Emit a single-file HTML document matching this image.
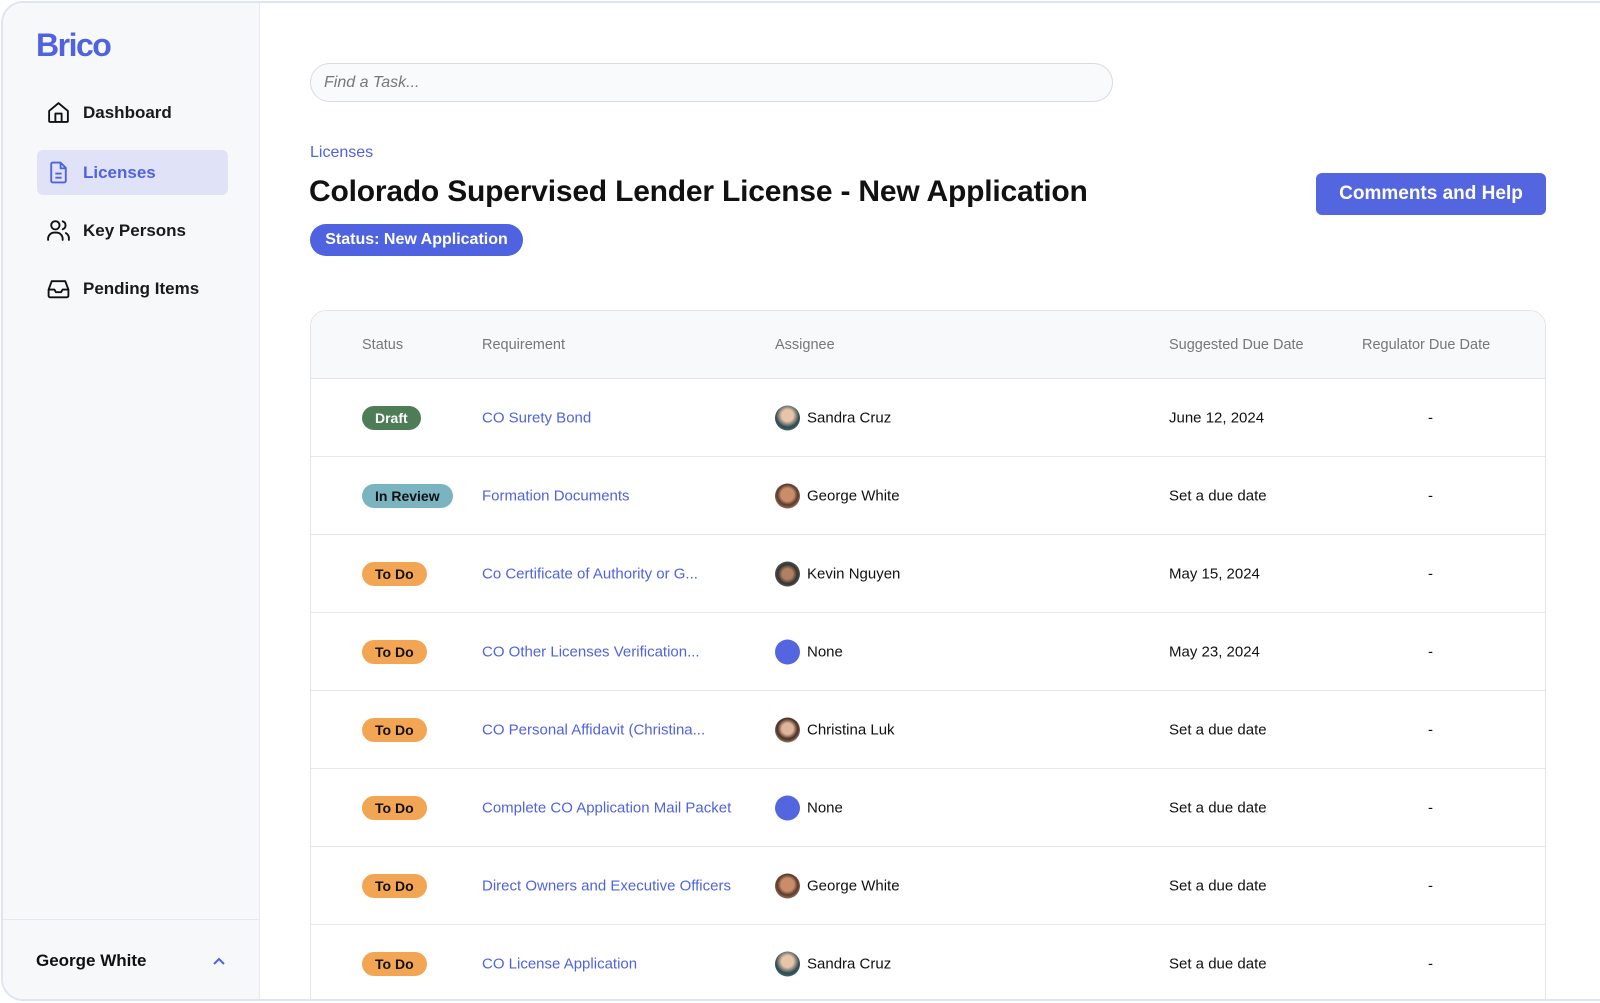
<!DOCTYPE html>
<html><head><meta charset="utf-8"><style>
*{box-sizing:border-box;margin:0;padding:0}
body{width:1600px;height:1003px;background:#fff;font-family:"Liberation Sans",sans-serif;color:#111;position:relative;overflow:hidden}
.frame{position:absolute;left:1px;top:1px;width:1640px;height:1000px;border:2px solid #dfe3f7;border-radius:22px;overflow:hidden;background:#fff}
.side{position:absolute;left:0;top:0;width:257px;height:100%;background:#f7f8fa;border-right:1px solid #e8eaef}
.logo{position:absolute;left:33px;top:24px;font-size:32px;font-weight:700;color:#4f63e0;letter-spacing:-1.5px}
.nav{position:absolute;left:34px;width:191px;height:45px;display:flex;align-items:center;padding-left:9px;font-size:17px;font-weight:700;color:#1a1a1a;border-radius:6px}
.nav svg{width:25px;height:25px;margin-right:12px}
.nav.act{background:#e0e3f8;color:#4f63e0}
.foot{position:absolute;left:0;top:916px;width:256px;border-top:1px solid #e6e8ee;height:90px}
.foot span{position:absolute;left:33px;top:31px;font-size:17px;font-weight:700}
.search{position:absolute;left:307px;top:60px;width:803px;height:39px;border:1px solid #d9dbe0;border-radius:20px;background:#f9fafb;padding-left:13px;line-height:37px;font-size:16px;font-style:italic;color:#777}
.crumb{position:absolute;left:307px;top:141px;font-size:16px;color:#4f63e0}
h1{position:absolute;left:306px;top:172px;font-size:30px;font-weight:700;letter-spacing:-0.2px;white-space:nowrap}
.stat{position:absolute;left:307px;top:221px;width:213px;height:32px;border-radius:16px;background:#4f63e0;color:#fff;font-size:16px;font-weight:700;line-height:32px;text-align:center}
.btn{position:absolute;left:1313px;top:170px;width:230px;height:42px;border-radius:6px;background:#5366e0;color:#fff;font-size:19px;font-weight:700;line-height:42px;text-align:center}
.tbl{position:absolute;left:307px;top:307px;width:1236px;height:720px;border:1px solid #e3e5ea;border-radius:16px;overflow:hidden;background:#fff}
.hd{height:68px;background:#f8f9fa;border-bottom:1px solid #e3e5ea;position:relative;font-size:14.5px;color:#777}
.hd span,.row span{position:absolute;top:50%;transform:translateY(-50%);white-space:nowrap}
.row{height:78px;border-bottom:1px solid #e6e7eb;position:relative;font-size:15px;color:#111}
.pill{height:24px;line-height:24px;border-radius:12px;padding:0 13px;font-weight:700;font-size:14px}
.dr{background:#4d7c57;color:#fff}.ir{background:#7ab4c1;color:#111}.td{background:#f2a654;color:#111}
.lk{color:#4f63e0}
.av{width:25px;height:25px;border-radius:50%}
</style></head><body>
<div class="frame">
<div class="side">
<div class="logo">Brico</div>
<div class="nav" style="top:87px"><svg viewBox="0 0 24 24" fill="none" stroke="#111" stroke-width="1.8" stroke-linejoin="round"><path d="M3 10.5L12 3l9 7.5V20a1 1 0 0 1-1 1H4a1 1 0 0 1-1-1z"/><path d="M9 21v-8h6v8"/></svg>Dashboard</div>
<div class="nav act" style="top:147px"><svg viewBox="0 0 24 24" fill="none" stroke="#4f63e0" stroke-width="1.8" stroke-linejoin="round"><path d="M6 2.5h8l5 5V20a1.5 1.5 0 0 1-1.5 1.5h-11A1.5 1.5 0 0 1 5 20V4a1.5 1.5 0 0 1 1-1.5z"/><path d="M14 2.5V8h5M9 13h6M9 17h6"/></svg>Licenses</div>
<div class="nav" style="top:205px"><svg viewBox="0 0 24 24" fill="none" stroke="#111" stroke-width="1.8" stroke-linecap="round"><circle cx="9" cy="7" r="4"/><path d="M2 21v-1a6 6 0 0 1 6-6h2a6 6 0 0 1 6 6v1M16 3.2a4 4 0 0 1 0 7.6M19 14.5a6 6 0 0 1 3 5.5v1"/></svg>Key Persons</div>
<div class="nav" style="top:263px"><svg viewBox="0 0 24 24" fill="none" stroke="#111" stroke-width="1.8" stroke-linejoin="round"><path d="M2.5 13l3-8h13l3 8v6a1.5 1.5 0 0 1-1.5 1.5H4A1.5 1.5 0 0 1 2.5 19z"/><path d="M2.5 13h5.5l1.5 2.5h5l1.5-2.5h5.5"/></svg>Pending Items</div>
<div class="foot"><span>George White</span><svg style="position:absolute;left:209px;top:36px" width="14" height="10" viewBox="0 0 14 10"><path d="M2 8l5-5 5 5" fill="none" stroke="#4f63e0" stroke-width="2"/></svg></div>
</div>
<div class="search">Find a Task...</div>
<div class="crumb">Licenses</div>
<h1>Colorado Supervised Lender License - New Application</h1>
<div class="stat">Status: New Application</div>
<div class="btn">Comments and Help</div>
<div class="tbl">
<div class="hd"><span style="left:51px">Status</span><span style="left:171px">Requirement</span><span style="left:464px">Assignee</span><span style="left:858px">Suggested Due Date</span><span style="left:1051px">Regulator Due Date</span></div>
<div class="row"><span class="pill dr" style="left:51px">Draft</span><span class="lk" style="left:171px">CO Surety Bond</span><span class="av" style="left:464px;background:radial-gradient(circle at 50% 40%,#e8c4a8 30%,#2c4a50 60%,#5a8f9a)"></span><span style="left:496px">Sandra Cruz</span><span style="left:858px">June 12, 2024</span><span style="left:1117px">-</span></div>
<div class="row"><span class="pill ir" style="left:51px">In Review</span><span class="lk" style="left:171px">Formation Documents</span><span class="av" style="left:464px;background:radial-gradient(circle at 50% 45%,#c98d6a 35%,#5a3a2a 55%,#d8b89a)"></span><span style="left:496px">George White</span><span style="left:858px">Set a due date</span><span style="left:1117px">-</span></div>
<div class="row"><span class="pill td" style="left:51px">To Do</span><span class="lk" style="left:171px">Co Certificate of Authority or G...</span><span class="av" style="left:464px;background:radial-gradient(circle at 50% 50%,#b08060 30%,#333 55%,#888)"></span><span style="left:496px">Kevin Nguyen</span><span style="left:858px">May 15, 2024</span><span style="left:1117px">-</span></div>
<div class="row"><span class="pill td" style="left:51px">To Do</span><span class="lk" style="left:171px">CO Other Licenses Verification...</span><span class="av" style="left:464px;background:#5366e0"></span><span style="left:496px">None</span><span style="left:858px">May 23, 2024</span><span style="left:1117px">-</span></div>
<div class="row"><span class="pill td" style="left:51px">To Do</span><span class="lk" style="left:171px">CO Personal Affidavit (Christina...</span><span class="av" style="left:464px;background:radial-gradient(circle at 50% 45%,#e0b49a 30%,#4a2e22 55%,#e8ddd5)"></span><span style="left:496px">Christina Luk</span><span style="left:858px">Set a due date</span><span style="left:1117px">-</span></div>
<div class="row"><span class="pill td" style="left:51px">To Do</span><span class="lk" style="left:171px">Complete CO Application Mail Packet</span><span class="av" style="left:464px;background:#5366e0"></span><span style="left:496px">None</span><span style="left:858px">Set a due date</span><span style="left:1117px">-</span></div>
<div class="row"><span class="pill td" style="left:51px">To Do</span><span class="lk" style="left:171px">Direct Owners and Executive Officers</span><span class="av" style="left:464px;background:radial-gradient(circle at 50% 45%,#c98d6a 35%,#5a3a2a 55%,#d8b89a)"></span><span style="left:496px">George White</span><span style="left:858px">Set a due date</span><span style="left:1117px">-</span></div>
<div class="row"><span class="pill td" style="left:51px">To Do</span><span class="lk" style="left:171px">CO License Application</span><span class="av" style="left:464px;background:radial-gradient(circle at 50% 40%,#e8c4a8 30%,#2c4a50 60%,#5a8f9a)"></span><span style="left:496px">Sandra Cruz</span><span style="left:858px">Set a due date</span><span style="left:1117px">-</span></div>
</div>
</div>
</body></html>
